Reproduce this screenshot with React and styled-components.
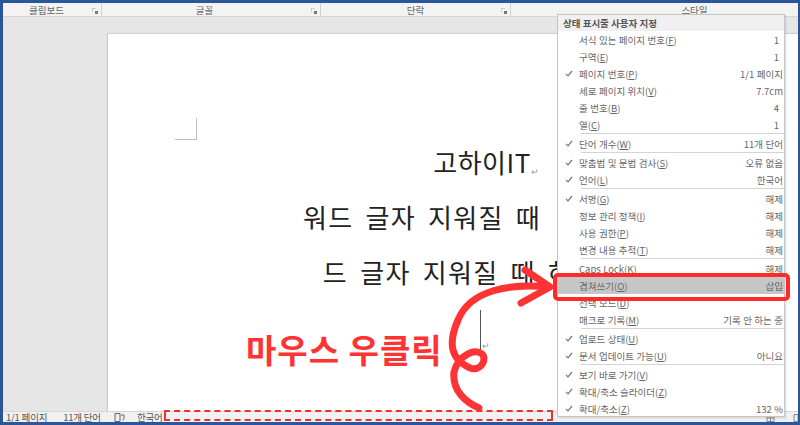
import React from 'react';
import styled, { createGlobalStyle } from 'styled-components';

const FONT = `"Noto Sans CJK KR", "Noto Sans", sans-serif`;

const Global = createGlobalStyle`
  html, body { margin: 0; padding: 0; background: #fff; }
  body { font-family: ${FONT}; }
`;

const Frame = styled.div`
  position: relative;
  width: 800px;
  height: 425px;
  box-sizing: border-box;
  overflow: hidden;
  display: flex;
  flex-direction: column;
  border: solid #2b579a;
  border-width: 3px 2px 3px 3px;
`;

const Ribbon = styled.div`
  flex: none;
  height: 14px;
  box-sizing: border-box;
  display: flex;
  background: #f3f3f3;
  border-bottom: 1px solid #d6d6d6;
`;

const Group = styled.div`
  position: relative;
  width: ${p => p.$w}px;
  flex: none;
  box-sizing: border-box;
  border-right: 1px solid #d2d2d2;
  font-size: 9.5px;
  line-height: 14px;
  color: #666;
  text-align: center;
  padding-right: ${p => p.$shift || 0}px;
`;

const Launcher = styled.svg`
  position: absolute;
  right: 3px;
  top: 5px;
  width: 6px;
  height: 6px;
`;

const DocArea = styled.div`
  flex: 1;
  min-height: 0;
  background: #e6e6e6;
  padding: 16px 0 0 104px;
  overflow: hidden;
`;

const Page = styled.div`
  width: 748px;
  height: 400px;
  background: #fff;
  border-top: 1px solid #d0d0d0;
  border-left: 1px solid #c8c8c8;
  box-shadow: 0 0 1px #ccc;
`;

const Corner = styled.div`
  width: 21px;
  height: 21px;
  margin: 84px 0 0 67px;
  border-right: 1px solid #bdbdbd;
  border-bottom: 1px solid #bdbdbd;
`;

const Lines = styled.div`
  margin-top: -6px;
`;

const Line = styled.div`
  height: 55px;
  line-height: 55px;
  text-align: center;
  white-space: pre;
  font-size: 26px;
  letter-spacing: ${p => p.$ls ?? 0.3}px;
  word-spacing: ${p => p.$ws ?? 0}px;
  color: #222;
  padding-left: ${p => p.$lead || 0}px;
  padding-right: ${p => p.$trim || 0}px;
`;

const Mark = styled.span`
  font-size: 9px;
  color: #999;
  letter-spacing: 0;
  vertical-align: -2px;
`;

const CaretRow = styled.div`
  display: flex;
  justify-content: center;
  align-items: flex-end;
  height: 42px;
  margin: 11px 0 0 6px;
`;

const Caret = styled.div`
  width: 1px;
  height: 42px;
  background: #555;
  margin-right: 1px;
`;

const StatusBar = styled.div`
  flex: none;
  height: 11px;
  box-sizing: border-box;
  display: flex;
  align-items: center;
  background: #f1f1f1;
  border-top: 1px solid #d6d6d6;
  padding-left: 3px;
  font-size: 9.5px;
  letter-spacing: -.2px;
  line-height: 10px;
  color: #555;
  white-space: nowrap;
`;

const StatusItem = styled.span`
  margin-right: ${p => p.$gap}px;
`;

const StatusIcon = styled.svg`
  width: 11px;
  height: 9px;
  margin-right: 12px;
  flex: none;
`;

const ViewIcons = styled.svg`
  width: 32px;
  height: 9px;
  margin-left: auto;
  flex: none;
`;

const Menu = styled.div`
  position: absolute;
  left: 554px;
  top: 11px;
  width: 228px;
  height: 403px;
  box-sizing: border-box;
  background: #fff;
  border: 1px solid #c6c6c6;
  box-shadow: 1px 1px 2px rgba(0,0,0,.15);
`;

const MenuHeader = styled.div`
  height: 16px;
  line-height: 16px;
  padding-left: 5px;
  background: #f0f0f0;
  font-size: 9.5px;
  font-weight: 700;
  color: #555;
`;

const Row = styled.div`
  height: 17px;
  display: flex;
  align-items: center;
  font-size: 9.5px;
  word-spacing: .3px;
  color: #666;
  white-space: nowrap;
  background: ${p => (p.$hot ? '#c6c6c6' : 'transparent')};
`;

const CheckSlot = styled.div`
  width: 21px;
  flex: none;
  display: flex;
  justify-content: center;
`;

const RowLabel = styled.div`
  flex: 1;
  u { text-underline-offset: 1px; }
`;

const RowValue = styled.div`
  padding-right: ${p => (p.$narrow ? 5 : 1)}px;
`;

const Sep = styled.div`
  height: 1px;
  margin: 0 0 1px 23px;
  background: #d4d4d4;
`;

const Annotation = styled.svg`
  position: absolute;
  left: -3px;
  top: -3px;
  width: 800px;
  height: 425px;
  pointer-events: none;
`;

const Callout = styled.div`
  position: absolute;
  left: 243px;
  top: 323px;
  font-size: 33px;
  line-height: 46px;
  font-weight: 700;
  letter-spacing: 1px;
  color: #ff3333;
  white-space: pre;
`;

const DashedBox = styled.div`
  position: absolute;
  left: 161px;
  top: 407px;
  width: 389px;
  height: 11px;
  box-sizing: border-box;
  border: 2px dashed #f03030;
  border-radius: 1px;
`;

const HotBox = styled.div`
  position: absolute;
  left: 550px;
  top: 270px;
  width: 237px;
  height: 28px;
  box-sizing: border-box;
  border: 4px solid #ff2a2a;
  border-radius: 5px;
`;

const Check = () => (
  <svg width="8" height="7" viewBox="0 0 8 7">
    <path d="M1 3.8 L3 5.8 L7 1" fill="none" stroke="#777" strokeWidth="1.2" />
  </svg>
);

const rows = [
  { l: '서식 있는 페이지 번호', k: 'F', v: '1', n: 1 },
  { l: '구역', k: 'E', v: '1', n: 1 },
  { c: 1, l: '페이지 번호', k: 'P', v: '1/1 페이지' },
  { l: '세로 페이지 위치', k: 'V', v: '7.7cm' },
  { l: '줄 번호', k: 'B', v: '4', n: 1 },
  { l: '열', k: 'C', v: '1', n: 1 },
  'sep',
  { c: 1, l: '단어 개수', k: 'W', v: '11개 단어' },
  'sep',
  { c: 1, l: '맞춤법 및 문법 검사', k: 'S', v: '오류 없음' },
  { c: 1, l: '언어', k: 'L', v: '한국어' },
  'sep',
  { c: 1, l: '서명', k: 'G', v: '해제' },
  { l: '정보 관리 정책', k: 'I', v: '해제' },
  { l: '사용 권한', k: 'P', v: '해제' },
  { l: '변경 내용 추적', k: 'T', v: '해제' },
  'sep',
  { l: 'Caps Lock', k: 'K', v: '해제' },
  { l: '겹쳐쓰기', k: 'O', v: '삽입', hot: 1 },
  { l: '선택 모드', k: 'D', v: '' },
  { l: '매크로 기록', k: 'M', v: '기록 안 하는 중' },
  'sep',
  { c: 1, l: '업로드 상태', k: 'U', v: '' },
  { c: 1, l: '문서 업데이트 가능', k: 'U', v: '아니요' },
  'sep',
  { c: 1, l: '보기 바로 가기', k: 'V', v: '' },
  { c: 1, l: '확대/축소 슬라이더', k: 'Z', v: '' },
  { c: 1, l: '확대/축소', k: 'Z', v: '132 %' },
];

const LauncherIcon = () => (
  <Launcher viewBox="0 0 6 6">
    <path d="M0 4V0H4" fill="none" stroke="#999" strokeWidth=".8" />
    <rect x="3" y="3" width="3" height="3" fill="#777" />
  </Launcher>
);

export default function App() {
  return (
    <Frame>
      <Global />
      <Ribbon>
        <Group $w={99} $shift={11}>클립보드<LauncherIcon /></Group>
        <Group $w={219} $shift={13}>글꼴<LauncherIcon /></Group>
        <Group $w={190}>단락<LauncherIcon /></Group>
        <Group $w={368}>스타일</Group>
      </Ribbon>
      <DocArea>
        <Page>
          <Corner />
          <Lines>
            <Line $lead={8} $ls={0.5}>고하이IT<Mark>↵</Mark></Line>
            <Line $trim={120} $ws={5} $ls={1.3}>워드 글자 지워질 때</Line>
            <Line $trim={68} $ws={5} $ls={1.3}>드 글자 지워질 때 하</Line>
          </Lines>
          <CaretRow><Caret /><Mark>↵</Mark></CaretRow>
        </Page>
      </DocArea>
      <StatusBar>
        <StatusItem $gap={16}>1/1 페이지</StatusItem>
        <StatusItem $gap={13}>11개 단어</StatusItem>
        <StatusIcon viewBox="0 0 11 9">
          <path d="M1 .5H6V8.5H1Z M7 2H10V5.5L8.5 7.5" fill="none" stroke="#666" strokeWidth="1" />
        </StatusIcon>
        <StatusItem $gap={0}>한국어</StatusItem>
        <ViewIcons viewBox="0 0 32 9">
          <path d="M1 1.5H8V8.5H1Z M4.5 1.5V8.5 M1 5H8 M28 1.5H32V8.5H28Z" fill="none" stroke="#888" strokeWidth="1" />
        </ViewIcons>
      </StatusBar>

      <Menu>
        <MenuHeader>상태 표시줄 사용자 지정</MenuHeader>
        {rows.map((r, i) =>
          r === 'sep' ? (
            <Sep key={i} />
          ) : (
            <Row key={i} $hot={r.hot}>
              <CheckSlot>{r.c ? <Check /> : null}</CheckSlot>
              <RowLabel>{r.l}(<u>{r.k}</u>)</RowLabel>
              <RowValue $narrow={r.n}>{r.v}</RowValue>
            </Row>
          )
        )}
      </Menu>
      <HotBox />
      <Callout>마우스 우클릭</Callout>
      <DashedBox />
      <Annotation viewBox="0 0 800 425">
        <g fill="none" stroke="#ff3333" strokeWidth="7" strokeLinecap="round" strokeLinejoin="round">
          <path d="M549 287 C510 283 470 290 458 320 C447 345 452 360 470 368 C482 372 487 358 482 354 C474 348 458 356 454 372 C452 390 465 402 479 408" />
          <path d="M525 270 L550 287 L521 303" />
        </g>
      </Annotation>
    </Frame>
  );
}
